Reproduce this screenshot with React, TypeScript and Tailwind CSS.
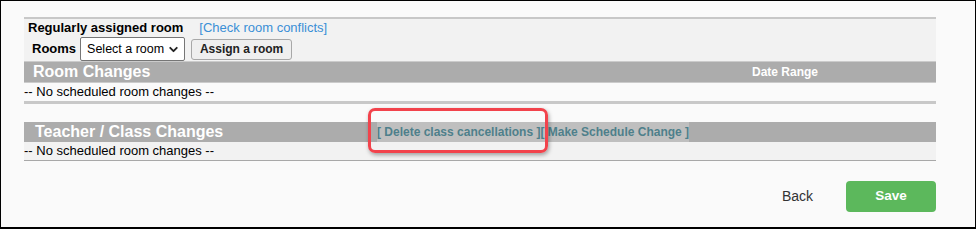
import React from "react";
import { ChevronDown } from "lucide-react";

export default function App() {
  return (
    <div
      className="relative w-[976px] h-[229px] border border-b-2 border-black bg-[#fafafa] pl-[23px] pr-[39px] pt-[16px] text-black"
      style={{ fontFamily: '"Liberation Sans", Arial, sans-serif' }}
    >
      {/* Top section */}
      <div className="border-t-2 border-[#c8c8c8] bg-[#f2f2f2]">
        <div className="flex items-center pl-[4px] pt-[1px] leading-[15px] text-[13px] h-[16px]">
          <span className="font-bold">Regularly assigned room</span>
          <span className="ml-[16px] text-[#3a8fd6]">[Check room conflicts]</span>
        </div>
        <div className="flex items-center h-[24px] mt-[2px] pl-[8px] text-[13px]">
          <span className="font-bold mr-[4px]">Rooms</span>
          <div className="relative flex items-center h-[24px] w-[105px] bg-white border border-[#767676] rounded-[2px] pl-[6px]">
            <span className="text-[12.5px] text-black">Select a room</span>
            <ChevronDown className="absolute right-[4px] top-[5px] text-[#222]" size={13} strokeWidth={3.5} />
          </div>
          <div className="ml-[6px] flex items-center justify-center h-[21px] w-[101px] bg-[#efefef] border border-[#a8a8a8] rounded-[3px] text-[12px] font-bold text-[#222]">
            Assign a room
          </div>
        </div>
      </div>

      {/* Room Changes header */}
      <div className="flex items-center h-[22px] border-y border-[#cbcbcb] bg-[#acacac] text-white font-bold">
        <div className="flex-1 pl-[9px] text-[16px] leading-[20px]">Room Changes</div>
        <div className="w-[302px] text-center text-[12px] leading-[20px]">Date Range</div>
      </div>
      <div className="h-[18px] flex items-center text-[13px] leading-[18px]">-- No scheduled room changes --</div>
      <div className="h-[3px] bg-[#c8c8c8]" />

      <div className="h-[18px]" />

      {/* Teacher / Class Changes header */}
      <div className="flex items-stretch h-[20px] bg-[#acacac]">
        <div className="w-[353px] pl-[11px] text-[16px] leading-[20px] text-white font-bold">Teacher / Class Changes</div>
        <div className="flex items-center bg-[#bfbfbf] text-[12px] font-bold text-[#4e7f8b] leading-[20px]">
          <span>[ Delete class cancellations ]</span>
          <span>[ Make Schedule Change ]</span>
        </div>
      </div>
      <div className="h-[18px] flex items-center bg-[#f2f2f2] text-[13px] leading-[18px] border-b border-[#a8a8a8] box-content">
        -- No scheduled room changes --
      </div>

      {/* Footer */}
      <div className="flex items-center justify-end mt-[20px]">
        <span className="text-[14px] text-[#333] mr-[33px]">Back</span>
        <div className="flex items-center justify-center w-[90px] h-[31px] bg-[#5cb85c] rounded-[4px] text-white text-[13.5px] font-bold">
          Save
        </div>
      </div>

      {/* Red annotation */}
      <div className="absolute left-[367px] top-[107px] w-[180px] h-[45px] border-[3px] border-[#f2434c] rounded-[7px] shadow-[1px_2px_4px_rgba(0,0,0,0.35)]" />
    </div>
  );
}
